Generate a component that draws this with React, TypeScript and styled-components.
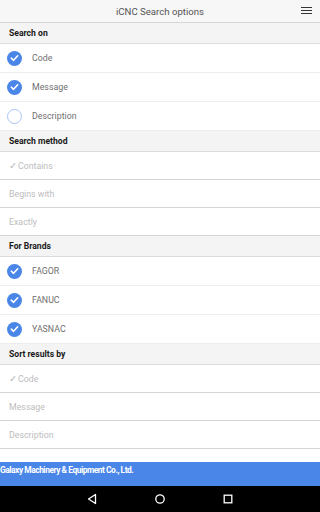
import React from 'react';
import styled, { createGlobalStyle } from 'styled-components';

const GlobalStyle = createGlobalStyle`
  html, body {
    margin: 0;
    padding: 0;
    background: #ffffff;
    font-family: Roboto, "Liberation Sans", sans-serif;
  }
`

const Screen = styled.div`
  width: 320px;
  height: 512px;
  display: flex;
  flex-direction: column;
  overflow: hidden;
  background: #ffffff;
`

const TopBar = styled.div`
  height: 22px;
  flex-shrink: 0;
  display: flex;
  align-items: center;
  justify-content: center;
  position: relative;
  background: #f7f7f7;
  border-bottom: 1px solid #d6d6d6;
  color: #555;
  font-size: 9.6px;
`

const MenuButton = styled.div`
  position: absolute;
  right: 8px;
  top: 7px;
  width: 11px;
  display: flex;
  flex-direction: column;
  gap: 2px;
  & > span {
    display: block;
    height: 1px;
    background: #333;
  }
`

const Content = styled.div`
  flex: 1;
  overflow: hidden;
`

const SectionHeader = styled.div`
  height: 20px;
  display: flex;
  align-items: center;
  padding-left: 9px;
  background: #f4f4f4;
  border-bottom: 1px solid #dcdcdc;
  color: #1a1a1a;
  font-size: 8.6px;
  font-weight: 700;
`

const CheckRow = styled.div`
  height: 28px;
  display: flex;
  align-items: center;
  padding-left: 7px;
  border-bottom: 1px solid #ececec;
  color: #707070;
  font-size: 8.8px;
`

const Circle = styled.div<{ $on: boolean }>`
  width: 15px;
  height: 15px;
  box-sizing: border-box;
  border-radius: 50%;
  margin-right: 10px;
  display: flex;
  align-items: center;
  justify-content: center;
  background: ${p => (p.$on ? '#4a86e8' : '#ffffff')};
  border: ${p => (p.$on ? 'none' : '1px solid #a9c5f5')};
`

const OptionRow = styled.div`
  height: 27px;
  display: flex;
  align-items: center;
  padding-left: 9px;
  border-bottom: 1px solid #d4d4d4;
  color: #bdbdbd;
  font-size: 8.8px;
`

const Tick = styled.span`
  font-family: "DejaVu Sans", sans-serif;
  font-size: 9.5px;
  margin-right: 1px;
  color: #b8b8b8;
`

const Footer = styled.div`
  height: 24px;
  flex-shrink: 0;
  background: #4a86e8;
  color: #ffffff;
  font-size: 8.4px;
  font-weight: 700;
  letter-spacing: -0.45px;
  padding-top: 3px;
  box-sizing: border-box;
`

const NavBar = styled.div`
  height: 26px;
  flex-shrink: 0;
  background: #000000;
  display: flex;
  align-items: center;
  justify-content: center;
  gap: 56px;
`

const Check = () => (
  <svg width="9" height="8" viewBox="0 0 9 8">
    <path d="M1.3 4.2 L3.6 6.3 L7.7 1.8" fill="none" stroke="#fff" strokeWidth="1.6" strokeLinecap="round" strokeLinejoin="round" />
  </svg>
);

const CheckItem = ({ label, on }: { label: string; on: boolean }) => (
  <CheckRow>
    <Circle $on={on}>{on && <Check />}</Circle>
    {label}
  </CheckRow>
);

const Option = ({ label, on }: { label: string; on?: boolean }) => (
  <OptionRow>{on && <Tick>{'\u2713'}</Tick>}{label}</OptionRow>
);

export default function App() {
  return (
    <Screen>
      <GlobalStyle />
      <TopBar>
        iCNC Search options
        <MenuButton><span /><span /><span /></MenuButton>
      </TopBar>
      <Content>
        <SectionHeader>Search on</SectionHeader>
        <CheckItem label="Code" on />
        <CheckItem label="Message" on />
        <CheckItem label="Description" on={false} />
        <SectionHeader>Search method</SectionHeader>
        <Option label="Contains" on />
        <Option label="Begins with" />
        <Option label="Exactly" />
        <SectionHeader>For Brands</SectionHeader>
        <CheckItem label="FAGOR" on />
        <CheckItem label="FANUC" on />
        <CheckItem label="YASNAC" on />
        <SectionHeader>Sort results by</SectionHeader>
        <Option label="Code" on />
        <Option label="Message" />
        <Option label="Description" />
      </Content>
      <Footer>Galaxy Machinery &amp; Equipment Co., Ltd.</Footer>
      <NavBar>
        <svg width="12" height="12" viewBox="0 0 12 12">
          <path d="M9.5 1.5 L2.5 6 L9.5 10.5 Z" fill="none" stroke="#fff" strokeWidth="1.3" strokeLinejoin="round" />
        </svg>
        <svg width="12" height="12" viewBox="0 0 12 12">
          <circle cx="6" cy="6" r="4.2" fill="none" stroke="#fff" strokeWidth="1.3" />
        </svg>
        <svg width="12" height="12" viewBox="0 0 12 12">
          <rect x="2.2" y="2.2" width="7.6" height="7.6" fill="none" stroke="#fff" strokeWidth="1.3" />
        </svg>
      </NavBar>
    </Screen>
  );
}
